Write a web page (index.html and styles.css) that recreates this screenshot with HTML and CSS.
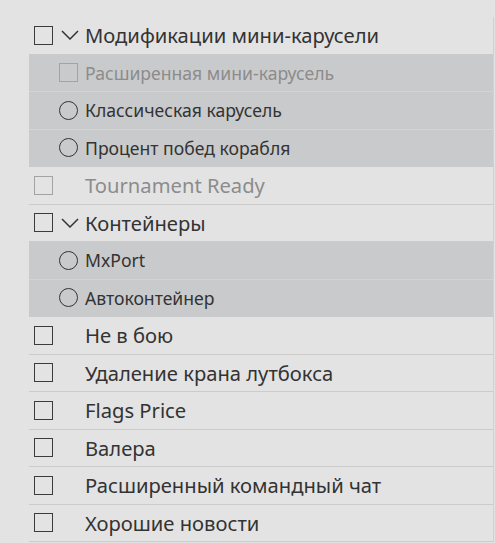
FILE: index.html
```html
<!DOCTYPE html>
<html>
<head>
<meta charset="utf-8">
<link rel="stylesheet" href="styles.css">
</head>
<body>
<div class="list">
  <div class="row top">
    <span class="box"></span>
    <svg class="chev" width="18" height="10" viewBox="0 0 18 10"><path d="M1 1 L9 9 L17 1" fill="none" stroke="#333" stroke-width="1.5"/></svg>
    <span class="label">Модификации мини-карусели</span>
  </div>
  <div class="group">
    <div class="row sub">
      <span class="box disabled"></span>
      <span class="label dim">Расширенная мини-карусель</span>
    </div>
    <div class="row sub">
      <span class="radio"></span>
      <span class="label">Классическая карусель</span>
    </div>
    <div class="row sub">
      <span class="radio"></span>
      <span class="label">Процент побед корабля</span>
    </div>
  </div>
  <div class="row top">
    <span class="box disabled"></span>
    <span class="gap"></span>
    <span class="label dim">Tournament Ready</span>
  </div>
  <div class="row top">
    <span class="box"></span>
    <svg class="chev" width="18" height="10" viewBox="0 0 18 10"><path d="M1 1 L9 9 L17 1" fill="none" stroke="#333" stroke-width="1.5"/></svg>
    <span class="label">Контейнеры</span>
  </div>
  <div class="group">
    <div class="row sub">
      <span class="radio"></span>
      <span class="label">MxPort</span>
    </div>
    <div class="row sub">
      <span class="radio"></span>
      <span class="label">Автоконтейнер</span>
    </div>
  </div>
  <div class="row top">
    <span class="box"></span>
    <span class="gap"></span>
    <span class="label">Не в бою</span>
  </div>
  <div class="row top">
    <span class="box"></span>
    <span class="gap"></span>
    <span class="label">Удаление крана лутбокса</span>
  </div>
  <div class="row top">
    <span class="box"></span>
    <span class="gap"></span>
    <span class="label">Flags Price</span>
  </div>
  <div class="row top">
    <span class="box"></span>
    <span class="gap"></span>
    <span class="label">Валера</span>
  </div>
  <div class="row top">
    <span class="box"></span>
    <span class="gap"></span>
    <span class="label">Расширенный командный чат</span>
  </div>
  <div class="row top">
    <span class="box"></span>
    <span class="gap"></span>
    <span class="label">Хорошие новости</span>
  </div>
</div>
</body>
</html>
```
FILE: styles.css
```css
html, body {
  margin: 0;
  padding: 0;
  background: #e3e3e3;
}
body {
  font-family: "Noto Sans", "Open Sans", sans-serif;
  color: #333;
  overflow: hidden;
  height: 543px;
}
.list {
  margin-left: 29px;
  margin-top: 17px;
  width: 464px;
  border-right: 1px solid #d0d0d0;
}
.row {
  box-sizing: border-box;
  height: 37.5px;
  display: flex;
  align-items: center;
  border-bottom: 1px solid #cbcbcb;
}
.top {
  padding-left: 5px;
  font-size: 20.2px;
}
.group {
  background: #c9cacb;
}
.sub {
  padding-left: 30px;
  font-size: 17.6px;
  border-bottom: 1px solid #d3d4d5;
}
.group .sub:last-child {
  border-bottom-color: #c9cacb;
}
.box {
  box-sizing: border-box;
  width: 19px;
  height: 19px;
  border: 1.5px solid #3c3c3c;
  flex: none;
}
.box.disabled {
  border-color: #a3a3a3;
}
.radio {
  box-sizing: border-box;
  width: 19px;
  height: 19px;
  border: 1.5px solid #333;
  border-radius: 50%;
  flex: none;
}
.chev {
  margin-left: 8px;
  flex: none;
}
.gap {
  width: 26px;
  flex: none;
}
.label {
  margin-left: 6px;
  white-space: nowrap;
}
.sub .label {
  margin-left: 7px;
}
.dim {
  color: #8c8c8c;
}
```
